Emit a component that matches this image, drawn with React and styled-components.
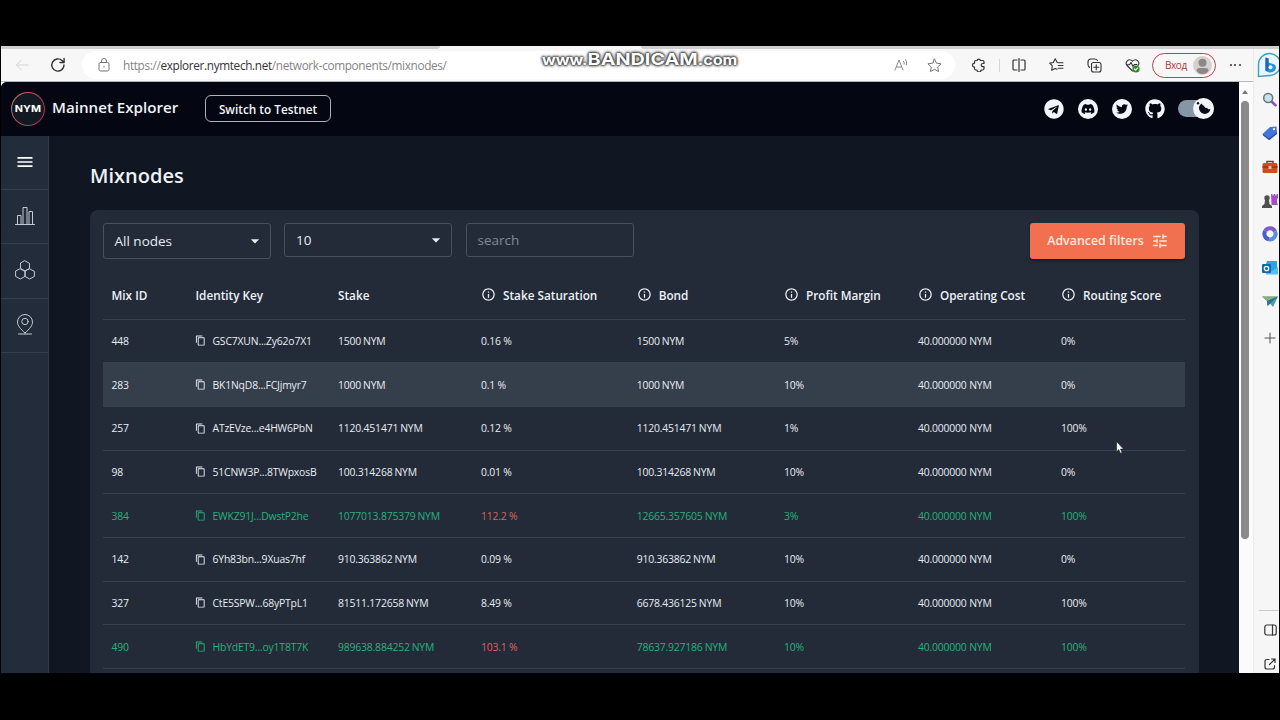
import React from 'react';
import styled, { createGlobalStyle, css } from 'styled-components';
import {
    MdMenu, MdTune, MdInfoOutline, MdContentCopy, MdArrowDropDown,
} from 'react-icons/md';
import { FaTelegram, FaTwitter, FaDiscord, FaGithub } from 'react-icons/fa';

const nodes = [
    { id: '448', key: 'GSC7XUN...Zy62o7X1', stake: '1500', sat: '0.16 %', bond: '1500', margin: '5%', score: '0%' },
    { id: '283', key: 'BK1NqD8...FCJjmyr7', stake: '1000', sat: '0.1 %', bond: '1000', margin: '10%', score: '0%', hovered: true },
    { id: '257', key: 'ATzEVze...e4HW6PbN', stake: '1120.451471', sat: '0.12 %', bond: '1120.451471', margin: '1%', score: '100%' },
    { id: '98', key: '51CNW3P...8TWpxosB', stake: '100.314268', sat: '0.01 %', bond: '100.314268', margin: '10%', score: '0%' },
    { id: '384', key: 'EWKZ91J...DwstP2he', stake: '1077013.875379', sat: '112.2 %', bond: '12665.357605', margin: '3%', score: '100%', active: true },
    { id: '142', key: '6Yh83bn...9Xuas7hf', stake: '910.363862', sat: '0.09 %', bond: '910.363862', margin: '10%', score: '0%' },
    { id: '327', key: 'CtE5SPW...68yPTpL1', stake: '81511.172658', sat: '8.49 %', bond: '6678.436125', margin: '10%', score: '100%' },
    { id: '490', key: 'HbYdET9...oy1T8T7K', stake: '989638.884252', sat: '103.1 %', bond: '78637.927186', margin: '10%', score: '100%', active: true },
];

const columns = [
    { label: 'Mix ID' },
    { label: 'Identity Key' },
    { label: 'Stake' },
    { label: 'Stake Saturation', info: true },
    { label: 'Bond', info: true },
    { label: 'Profit Margin', info: true },
    { label: 'Operating Cost', info: true },
    { label: 'Routing Score', info: true },
];

function Toolbar() {
    return (
        <ToolbarRow>
            <BackSlot>
                <LineIcon $color='#d2d2d2' width='14' height='14' viewBox='0 0 14 14'>
                    <path d='M13 7H1.5M6.5 2L1.5 7l5 5' />
                </LineIcon>
            </BackSlot>
            <ReloadSlot>
                <LineIcon $color='#333' $weight={ 1.4 } width='16' height='16' viewBox='0 0 16 16'>
                    <path d='M14 8a6.1 6.1 0 1 1-1.9-4.4L14 5.4M14.1 1.4v4.1H10' />
                </LineIcon>
            </ReloadSlot>
            <AddressBar>
                <LineIcon $color='#777' width='12' height='14' viewBox='0 0 12 14'>
                    <rect x='1' y='4.5' width='10' height='8.5' rx='1.5' />
                    <path d='M3.5 4.5V3a2.5 2.5 0 0 1 5 0v1.5M6 8.2v1' />
                </LineIcon>
                <Url>https://<b>explorer.nymtech.net</b>/network-components/mixnodes/</Url>
                <BarActions>
                    <LineIcon $color='#8a8a8a' width='15' height='14' viewBox='0 0 15 14'>
                        <path d='M1 12L5 2l4 10M2.4 9h5.2M9.5 3.3q1.2 1.3.7 3M11.5 1.5q2 2.4 1 5.3' />
                    </LineIcon>
                    <LineIcon $color='#777' width='15' height='15' viewBox='0 0 15 15'>
                        <path d='M7.5 1l2 4.2 4.6.6-3.4 3.2.9 4.6-4.1-2.3-4.1 2.3.9-4.6L.9 5.8l4.6-.6z' />
                    </LineIcon>
                </BarActions>
            </AddressBar>
            <ToolIcons>
                <LineIcon $color='#333' $weight={ 1.2 } width='14' height='14' viewBox='0 0 14 14'>
                    <path d='M5 2.5a1.8 1.8 0 0 1 3.5 0H10.5q1.5 0 1.5 1.5v1.5H10.8a1.6 1.6 0 1 0 0 3.2H12V10.500Q12 12 10.500 12H9a2 2 0 0 1-4 0H3.800Q2.500 12 2.500 10.500V9.200a2 2 0 0 1 0-4V4Q2.500 2.500 4 2.500z' />
                </LineIcon>
                <ToolDivider />
                <LineIcon $color='#333' $weight={ 1.2 } width='14' height='14' viewBox='0 0 14 14'>
                    <path d='M5 2H2Q1 2 1 3v8q0 1 1 1h3M9 2h3q1 0 1 1v8q0 1-1 1H9M7 .5v13' />
                </LineIcon>
                <LineIcon $color='#333' $weight={ 1.1 } width='15' height='14' viewBox='0 0 15 14'>
                    <path d='M9.5 4.7L8.2 4.500 6.200.8 4.300 4.500.7 5.100l2.600 2.700-.6 4.400 3.500-1.800 1.800.9M9.500 4.700H14M9.200 7.500H14M9.200 10.300H14' />
                </LineIcon>
                <LineIcon $color='#333' $weight={ 1.1 } width='15' height='15' viewBox='0 0 15 15'>
                    <rect x='4.5' y='4.5' width='9.5' height='9.5' rx='2' />
                    <path d='M9.25 6.8v5M6.75 9.25h5M2.5 9.5Q1 8 1 6.5V4q0-3 3-3h3.5Q9.5 1 10.5 2.5' />
                </LineIcon>
                <LineIcon $color='#333' $weight={ 1.1 } width='15' height='15' viewBox='0 0 15 15'>
                    <path d='M7.5 13L2 7.5C-.5 4.5 3.5-.5 7.5 3.2 11.5-.5 15.5 4.5 13 7.5M1.5 6.7h3L6 4.5l2 4 1.3-2H12' />
                    <circle cx='11' cy='11' r='3.6' fill='#2b8a2f' stroke='none' />
                    <path d='M9.4 11l1.2 1.2 2-2.2' stroke='#fff' />
                </LineIcon>
            </ToolIcons>
            <SignIn>
                Вход
                <svg width='19' height='19' viewBox='0 0 19 19'>
                    <circle cx='9.5' cy='9.5' r='9.5' fill='#d5d1ce' />
                    <circle cx='9.5' cy='6.8' r='4' fill='#8c8886' />
                    <path d='M3.5 14.5q0-2.5 3-2.5h6q3 0 3 2.5-1.5 3.5-6 3.5t-6-3.5z' fill='#8c8886' />
                </svg>
            </SignIn>
            <Dots><i /><i /><i /></Dots>
        </ToolbarRow>
    );
}

function EdgeRail() {
    return (
        <Rail>
            <BingSlot>
                <svg width='22' height='26' viewBox='0 0 22 26'>
                    <path d='M1.5 24.5V12.5a11 11 0 1 1 11 11z' fill='#eaf7fd' stroke='#3b9fc7' strokeWidth='1.4' />
                    <path d='M8.500 5.500l3 1v4l5.500 1.800q2 1 2 3.200 0 3-3.500 4.500-4 1.500-7-1.500z' fill='#2a93dd' />
                    <path d='M8.500 5.500l3 1v11.500q-1.500 1-3 .5z' fill='#1b62c4' />
                    <circle cx='13.500' cy='15.300' r='2' fill='#eaf7fd' />
                </svg>
            </BingSlot>
            <RailSlot>
                <svg width='16' height='16' viewBox='0 0 16 16'>
                    <path d='M9.5 9.5l4 3.8' stroke='#a04bc0' strokeWidth='2.6' strokeLinecap='round' />
                    <circle cx='6.2' cy='6' r='4.5' fill='#c5e4f2' stroke='#69747d' strokeWidth='1.5' />
                </svg>
            </RailSlot>
            <RailSlot>
                <svg width='16' height='16' viewBox='0 0 16 16'>
                    <path d='M1 8.5L8 2l6.500-.5L15 8l-7 6.500q-1 .8-2 0L1 10q-.7-.8 0-1.500z' fill='#4774d9' />
                    <path d='M1 9l6 4.500L15 7v2l-7.500 6L1 10.500z' fill='#2d4fae' />
                    <circle cx='12' cy='4.2' r='1.1' fill='#fff' />
                </svg>
            </RailSlot>
            <RailSlot>
                <svg width='16' height='16' viewBox='0 0 16 16'>
                    <path d='M5 5V2.5h6V5' fill='none' stroke='#803517' strokeWidth='1.5' />
                    <rect x='.5' y='4' width='15' height='10' rx='1.5' fill='#cf4d22' />
                    <path d='M.5 8h15' stroke='#8c2e12' strokeWidth='1.4' />
                    <rect x='6.5' y='7' width='3' height='3' fill='#f2b59d' />
                </svg>
            </RailSlot>
            <RailSlot>
                <svg width='16' height='16' viewBox='0 0 16 16'>
                    <path d='M9 1h1.5v1.5h1.2V1h1.6v1.5h1.2V1H16v4l-1 1v4l1 2H9.5z' fill='#a84bcb' />
                    <circle cx='5' cy='5' r='2.7' fill='#505050' />
                    <path d='M3 7h4l.5 4L10 13v2H0v-2l2.5-2z' fill='#505050' />
                </svg>
            </RailSlot>
            <RailSlot>
                <svg width='16' height='16' viewBox='0 0 16 16' fill='none' strokeWidth='4'>
                    <path d='M13 5.5A5.5 5.5 0 0 0 3.2 5' stroke='#7a5fcb' />
                    <path d='M3.2 5A5.5 5.5 0 0 0 7 13.3' stroke='#4660c8' />
                    <path d='M7 13.3A5.5 5.5 0 0 0 13 5.5' stroke='#5b8de0' />
                </svg>
            </RailSlot>
            <RailSlot>
                <svg width='16' height='16' viewBox='0 0 16 16'>
                    <path d='M5 1h10v13H4V4z' fill='#2ba5e3' />
                    <path d='M4 8l6 3 6-4v7.5H4z' fill='#50c4ee' />
                    <rect x='0' y='4' width='9' height='9' rx='1' fill='#0a68b5' />
                    <circle cx='4.5' cy='8.5' r='2.2' fill='none' stroke='#fff' strokeWidth='1.3' />
                </svg>
            </RailSlot>
            <RailSlot>
                <svg width='16' height='16' viewBox='0 0 16 16'>
                    <path d='M0 3.5h16L11 14 8 10.5 5.5 13 5 8z' fill='#4a9fb3' />
                    <path d='M0 3.5h16L5 8z' fill='#8fae79' />
                    <path d='M16 3.5L5.5 13 5 8z' fill='#2f7291' />
                </svg>
            </RailSlot>
            <RailSlot $tall>
                <LineIcon $color='#555' width='12' height='12' viewBox='0 0 12 12'>
                    <path d='M6 1v10M1 6h10' />
                </LineIcon>
            </RailSlot>
            <RailBottom>
                <LineIcon $color='#333' $weight={ 1.2 } width='13' height='12' viewBox='0 0 13 12'>
                    <rect x='.8' y='1' width='11.4' height='10' rx='2' />
                    <path d='M8.5 1v10' />
                </LineIcon>
                <LineIcon $color='#333' $weight={ 1.2 } width='12' height='12' viewBox='0 0 12 12'>
                    <path d='M5 1.5H3q-2 0-2 2V9q0 2 2 2h5.5q2 0 2-2V7.5M7.5 1H11v3.5M11 1L5.5 6.5' />
                </LineIcon>
            </RailBottom>
        </Rail>
    );
}

function AppHeader() {
    return (
        <HeaderBar>
            <Logo><span>NYM</span></Logo>
            <Brand>Mainnet Explorer</Brand>
            <NetworkButton>Switch to Testnet</NetworkButton>
            <Socials>
                <FaTelegram size={ 20 } />
                <Disc><FaDiscord size={ 14 } /></Disc>
                <Disc><FaTwitter size={ 12 } /></Disc>
                <FaGithub size={ 20 } />
                <ThemeSwitch>
                    <svg width='21' height='21' viewBox='0 0 21 21'>
                        <circle cx='10.5' cy='10.5' r='10.5' fill='#f2f5fa' />
                        <path d='M9 5.500C6.500 6.500 5.500 9 6.200 11.500 7 14.500 10 16.500 13 15.800 15.500 15.200 17.200 13.200 17.300 11 16 11.800 14.600 11.200 14.200 9.800 12.600 10.300 11.200 9.400 11.200 7.800 9.800 7.700 9 6.800 9 5.500z' fill='#070b15' />
                        <circle cx='5' cy='5.300' r='1.200' fill='#070b15' />
                    </svg>
                </ThemeSwitch>
            </Socials>
        </HeaderBar>
    );
}

function NavRail() {
    return (
        <Nav>
            <NavItem><MdMenu size={ 20 } color='#fff' /></NavItem>
            <NavItem>
                <LineIcon $color='#c3cad3' width='20' height='20' viewBox='0 0 20 20'>
                    <path d='M.5 18.5h19M2.5 18.5v-9h3.5v9M8 18.5v-17h4v17M14 18.5V5.5h3.5v13' />
                </LineIcon>
            </NavItem>
            <NavItem>
                <LineIcon $color='#c3cad3' width='20' height='20' viewBox='0 0 20 20'>
                    <path d='M10 .8l4.5 2.6v5L10 11 5.5 8.4v-5zM5.3 8.9l4.7 2.5v5L5.3 19 .6 16.4v-5zM14.7 8.9l4.7 2.5v5L14.7 19 10 16.4v-5z' />
                </LineIcon>
            </NavItem>
            <NavItem>
                <LineIcon $color='#c3cad3' width='18' height='21' viewBox='0 0 18 21'>
                    <path d='M9 19C4 14.5 1.5 11.5 1.5 8a7.5 7.5 0 0 1 15 0c0 3.5-2.5 6.5-7.5 11zM2.5 20h13' />
                    <circle cx='9' cy='7.5' r='3.2' />
                </LineIcon>
            </NavItem>
        </Nav>
    );
}

function NodeRow({ node }) {
    return (
        <Row $hovered={ node.hovered } $active={ node.active }>
            <Cell>{ node.id }</Cell>
            <Cell><MdContentCopy size={ 11 } />{ node.key }</Cell>
            <Cell>{ node.stake }<Unit>NYM</Unit></Cell>
            <Cell $over={ node.active }>{ node.sat }</Cell>
            <Cell>{ node.bond }<Unit>NYM</Unit></Cell>
            <Cell>{ node.margin }</Cell>
            <Cell>40.000000 NYM</Cell>
            <Cell>{ node.score }</Cell>
        </Row>
    );
}

export default function App() {
    return (
        <Screen>
            <GlobalStyle />
            <Watermark>
                <small>www.</small>BANDICAM<small>.com</small>
            </Watermark>
            <TabStrip><i /><i /></TabStrip>
            <Browser>
                <BrowserMain>
                    <Toolbar />
                    <Viewport>
                        <Page>
                            <AppHeader />
                            <PageBody>
                                <NavRail />
                                <Content>
                                    <Title>Mixnodes</Title>
                                    <Card>
                                        <Filters>
                                            <Field $tall>All nodes<MdArrowDropDown size={ 20 } /></Field>
                                            <Field>10<MdArrowDropDown size={ 20 } /></Field>
                                            <Field $placeholder>search</Field>
                                            <FilterButton>Advanced filters<MdTune size={ 18 } /></FilterButton>
                                        </Filters>
                                        <HeadRow>
                                            { columns.map((col) => (
                                                <HeadCell key={ col.label }>
                                                    { col.info && <MdInfoOutline size={ 15 } /> }
                                                    { col.label }
                                                </HeadCell>
                                            )) }
                                        </HeadRow>
                                        { nodes.map((node) => <NodeRow key={ node.id } node={ node } />) }
                                    </Card>
                                </Content>
                            </PageBody>
                        </Page>
                        <Scrollbar><i /><span /></Scrollbar>
                    </Viewport>
                </BrowserMain>
                <EdgeRail />
            </Browser>
            <Cursor width='8' height='13' viewBox='0 0 8 13'>
                <path d='M.7.7v9.8l2.2-2 1.6 3.7 1.5-.7-1.6-3.5h3z' fill='#fff' stroke='#222' strokeWidth='.5' />
            </Cursor>
        </Screen>
    );
}

const GlobalStyle = createGlobalStyle`
    * {
        box-sizing: border-box;
    }
    body {
        margin: 0;
        background: #000;
        overflow: hidden;
        font-family: 'Open Sans', 'Noto Sans', sans-serif;
    }
    svg {
        flex-shrink: 0;
    }
`;

const Screen = styled.div`
    position: relative;
    width: 1280px;
    height: 720px;
    padding: 46px 1px 47px;
    background: #000;
`;

const Browser = styled.div`
    display: flex;
    height: 624px;
    overflow: hidden;
    background: #f7f7f7;
`;

const BrowserMain = styled.div`
    width: 1252px;
    display: flex;
    flex-direction: column;
`;

const TabStrip = styled.div`
    display: flex;
    justify-content: space-between;
    height: 3px;
    background: #f7f7f7;
    i {
        height: 3px;
        background: #cfcdcf;
    }
    i:first-child {
        width: 439px;
        border-bottom-right-radius: 3px;
    }
    i:last-child {
        width: 638px;
        border-bottom-left-radius: 3px;
    }
`;

const ToolbarRow = styled.div`
    display: flex;
    flex-shrink: 0;
    align-items: center;
    height: 33px;
    border-bottom: 1px solid #b5b9be;
`;

const LineIcon = styled.svg`
    display: block;
    fill: none;
    stroke: ${({ $color }) => $color};
    stroke-width: ${({ $weight }) => $weight || 1};
    stroke-linecap: round;
    stroke-linejoin: round;
`;

const BackSlot = styled.div`
    width: 49px;
    padding-left: 14px;
`;

const ReloadSlot = styled.div`
    width: 32px;
`;

const AddressBar = styled.div`
    display: flex;
    align-items: center;
    width: 873px;
    height: 28px;
    padding: 0 13px 0 16px;
    border-radius: 14px;
    background: #fff;
`;

const Url = styled.div`
    margin-left: 13px;
    color: #858585;
    font: 11.8px 'Open Sans', sans-serif;
    letter-spacing: -0.35px;
    b {
        color: #333;
        font-weight: 400;
    }
`;

const BarActions = styled.div`
    display: flex;
    align-items: center;
    gap: 18px;
    margin-left: auto;
`;

const ToolIcons = styled.div`
    display: flex;
    align-items: center;
    gap: 22.9px;
    margin-left: 17px;
`;

const ToolDivider = styled.i`
    width: 1px;
    height: 13px;
    margin: 0 -10.5px 0 -10px;
    background: #d5d5d5;
`;

const SignIn = styled.div`
    display: flex;
    align-items: center;
    justify-content: space-between;
    width: 64px;
    height: 25px;
    margin-left: 12px;
    padding: 0 3px 0 12px;
    border: 1px solid #b04848;
    border-radius: 13px;
    color: #a83a3a;
    font-size: 10px;
    letter-spacing: -0.4px;
`;

const Dots = styled.div`
    display: flex;
    gap: 2.5px;
    margin-left: 14px;
    i {
        width: 2px;
        height: 2px;
        border-radius: 1px;
        background: #333;
    }
`;

const Viewport = styled.div`
    display: flex;
    flex: 1;
    min-height: 0;
`;

const Page = styled.div`
    display: flex;
    flex-direction: column;
    width: 1238px;
    border-top-left-radius: 6px;
    background: #111722;
    color: #eef1f6;
    overflow: hidden;
`;

const Scrollbar = styled.div`
    width: 14px;
    padding: 8px 3px 0;
    background: #fbfbfb;
    i {
        display: block;
        width: 0;
        border: 3.5px solid transparent;
        border-top: 0;
        border-bottom: 4px solid #777;
    }
    span {
        display: block;
        width: 8px;
        height: 438px;
        margin: 7px 0 0 -1px;
        border-radius: 4px;
        background: #8a8a8a;
    }
`;

const HeaderBar = styled.header`
    display: flex;
    flex-shrink: 0;
    align-items: center;
    height: 54px;
    padding: 0 25px 1px 10px;
    background: #040711;
`;

const Logo = styled.div`
    display: flex;
    align-items: center;
    justify-content: center;
    width: 34px;
    height: 34px;
    border: 1.5px solid transparent;
    border-radius: 50%;
    background:
        linear-gradient(#121923, #121923) padding-box,
        linear-gradient(115deg, #b98470, #b62c5d 75%) border-box;
    color: #fff;
    font: 700 9px Inter, sans-serif;
    span {
        transform: scaleX(1.2);
    }
`;

const Brand = styled.div`
    width: 153px;
    margin: -4px 0 0 7px;
    font-size: 15.15px;
    font-weight: 600;
    white-space: nowrap;
`;

const NetworkButton = styled.button`
    width: 126px;
    height: 27px;
    padding: 0;
    border: 1px solid #aeb2b9;
    border-radius: 6px;
    background: none;
    color: #f2f4f8;
    font: 600 11.8px 'Open Sans', sans-serif;
`;

const Socials = styled.div`
    display: flex;
    align-items: center;
    gap: 13.7px;
    margin-left: auto;
    color: #f2f5fa;
`;

const Disc = styled.span`
    display: flex;
    align-items: center;
    justify-content: center;
    width: 20px;
    height: 20px;
    border-radius: 50%;
    background: #f2f5fa;
    color: #040711;
`;

const ThemeSwitch = styled.div`
    display: flex;
    align-items: center;
    justify-content: flex-end;
    width: 36px;
    height: 17px;
    margin-left: -1px;
    border-radius: 9px;
    background: #8796a5;
`;

const PageBody = styled.div`
    display: flex;
    flex: 1;
    min-height: 0;
`;

const Nav = styled.nav`
    width: 48px;
    border-right: 1px solid #313b48;
    background: #232c3a;
`;

const NavItem = styled.div`
    display: flex;
    align-items: center;
    justify-content: center;
    height: 54.2px;
    padding-bottom: 1px;
    border-bottom: 1px solid #35404d;
`;

const Content = styled.main`
    width: 1149.5px;
    padding: 26px 0 0 41px;
`;

const Title = styled.h1`
    height: 47.5px;
    margin: 0;
    font-size: 20px;
    font-weight: 600;
    line-height: 28px;
`;

const Card = styled.section`
    height: 600px;
    padding: 13px 14px 0 13px;
    border-radius: 8px;
    background: #232b39;
`;

const Filters = styled.div`
    display: flex;
    align-items: flex-start;
    gap: 13.5px;
    height: 49px;
    margin-left: -0.5px;
`;

const Field = styled.div`
    display: flex;
    align-items: center;
    justify-content: space-between;
    width: 168px;
    height: ${({ $tall }) => ($tall ? 36 : 34)}px;
    padding: 0 5px 0 11px;
    border: 1px solid #465160;
    border-radius: 3px;
    color: ${({ $placeholder }) => ($placeholder ? '#828995' : '#e8ecf2')};
    font-size: 13.5px;
`;

const FilterButton = styled.button`
    display: flex;
    align-items: center;
    justify-content: center;
    gap: 7px;
    width: 155px;
    height: 36px;
    margin-left: auto;
    padding: 0 0 0 2px;
    border: 0;
    border-radius: 3px;
    background: #f2704f;
    box-shadow: 0 2px 3px rgba(0, 0, 0, 0.35);
    color: #fde9e0;
    font: 600 12.4px 'Open Sans', sans-serif;
`;

const gridRow = css`
    display: grid;
    grid-template-columns: 84px 142.5px 143px 155.7px 147.3px 134px 143px 1fr;
    align-items: center;
    padding-left: 8.5px;
    border-bottom: 1px solid #37414d;
`;

const HeadRow = styled.div`
    ${gridRow}
    height: 48px;
    padding-bottom: 1px;
`;

const HeadCell = styled.div`
    display: flex;
    align-items: center;
    gap: 7px;
    font-size: 11.75px;
    font-weight: 600;
    white-space: nowrap;
`;

const Row = styled.div`
    ${gridRow}
    height: 43.7px;
    background: ${({ $hovered }) => ($hovered ? '#353e4b' : 'none')};
    color: ${({ $active }) => ($active ? '#27b17b' : '#e9edf3')};
`;

const Cell = styled.div`
    display: flex;
    align-items: center;
    color: ${({ $over }) => ($over ? '#db6459' : 'inherit')};
    font-size: 10.4px;
    font-weight: 500;
    letter-spacing: -0.18px;
    white-space: pre;
    svg {
        margin: 0 6.5px 0 -0.5px;
    }
`;

const Unit = styled.span`
    margin-left: 2px;
`;

// recorder overlay, sits on top of the toolbar
const Watermark = styled.div`
    position: absolute;
    top: 49px;
    left: 542px;
    z-index: 1;
    display: flex;
    align-items: baseline;
    color: #fff;
    font: 700 16.5px/20px Inter, sans-serif;
    text-shadow: 0 0 2px #333, 0 0 2px #333, 0 0 3px #444, 0 0 3px #444;
    transform: scaleX(1.2);
    transform-origin: left;
    small {
        font-size: 13.5px;
    }
`;

const Cursor = styled.svg`
    position: absolute;
    left: 1116px;
    top: 441px;
`;

const Rail = styled.aside`
    display: flex;
    flex-direction: column;
    flex-shrink: 0;
    width: 26px;
    padding-top: 3px;
    border-left: 1px solid #ececec;
    background: #f6f6f6;
    overflow: hidden;
`;

const BingSlot = styled.div`
    height: 31px;
    padding-left: 3px;
`;

const RailSlot = styled.div`
    display: flex;
    align-items: center;
    height: ${({ $tall }) => ($tall ? 40 : 33.6)}px;
    padding-left: ${({ $tall }) => ($tall ? 10 : 8)}px;
`;

const RailBottom = styled.div`
    display: flex;
    flex-direction: column;
    gap: 22px;
    height: 63px;
    margin: auto 0 0 5px;
    padding: 13px 0 0 5px;
    border-top: 1px solid #c9c9c9;
`;
